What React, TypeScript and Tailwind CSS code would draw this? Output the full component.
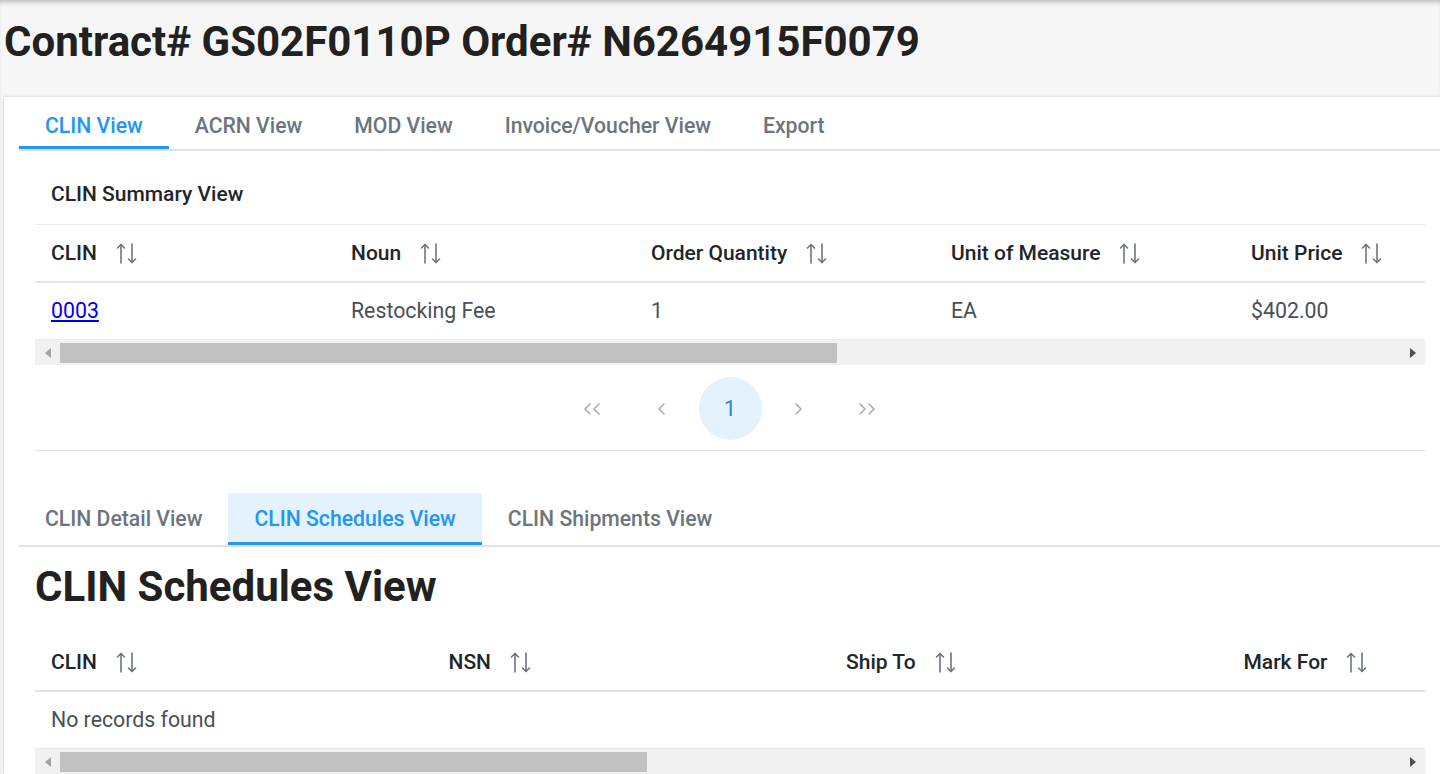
import React from 'react';

const topColumns = ['CLIN', 'Noun', 'Order Quantity', 'Unit of Measure', 'Unit Price'];
const bottomColumns = ['CLIN', 'NSN', 'Ship To', 'Mark For'];

function SortIcon() {
  return (
    <svg width="22" height="21" viewBox="0 0 22 21" fill="none" className="ml-[19px] shrink-0">
      <g stroke="#6c757d" strokeWidth="1.6" strokeLinecap="round" strokeLinejoin="round">
        <path d="M5 20V1.5" />
        <path d="M1.5 5L5 1.5L8.5 5" />
        <path d="M16 1V19.5" />
        <path d="M12.5 16L16 19.5L19.5 16" />
      </g>
    </svg>
  );
}

function Chevron({ dir, double }: { dir: 'left' | 'right'; double?: boolean }) {
  const single = dir === 'left' ? 'M7 1L2 6L7 11' : 'M1 1L6 6L1 11';
  return (
    <svg width={double ? 19 : 9} height="12" viewBox={double ? '0 0 19 12' : '0 0 9 12'} fill="none">
      <g stroke="#a9a9a9" strokeWidth="1.5" strokeLinecap="round" strokeLinejoin="round">
        <path d={single} />
        {double && <path d={single} transform="translate(9 0)" />}
      </g>
    </svg>
  );
}

function ScrollBar({ thumb }: { thumb: string }) {
  return (
    <div className="flex h-[25px] items-center bg-[#f1f1f1]">
      <div className="flex h-[25px] w-[25px] items-center justify-center">
        <svg width="6" height="10" viewBox="0 0 6 10">
          <polygon points="6,0 0,5 6,10" fill="#a3a3a3" />
        </svg>
      </div>
      <div className={`h-[20px] bg-[#c1c1c1] ${thumb}`} />
      <div className="flex-1" />
      <div className="flex h-[25px] w-[25px] items-center justify-center">
        <svg width="6" height="10" viewBox="0 0 6 10">
          <polygon points="0,0 6,5 0,10" fill="#505050" />
        </svg>
      </div>
    </div>
  );
}

function Tabs({ items, active, activeBg, top }: { items: string[]; active: number; activeBg?: boolean; top?: boolean }) {
  return (
    <div className="flex border-b-2 border-[#dee2e6]">
      {items.map((t, i) => (
        <div
          key={t}
          className={`flex h-[52px] items-center border-b-[3px] px-[26px] text-[21.2px] font-medium ${top ? 'pt-[8px]' : 'pt-[3px]'} ${
            i === active
              ? `border-[#2196f3] text-[#2196f3] ${activeBg ? 'bg-[#e3f2fd]' : ''}`
              : 'border-transparent text-[#6c757d]'
          }`}
        >
          {t}
        </div>
      ))}
    </div>
  );
}

export default function App() {
  return (
    <div className="min-h-screen bg-[#f6f6f6] font-['Roboto',sans-serif] shadow-[inset_0_5px_5px_-3px_rgba(0,0,0,0.25)]">
      <h1 className="pl-[4px] pt-[16px] text-[42px] font-bold leading-[51px] text-[#212121]">
        Contract# GS02F0110P Order# N6264915F0079
      </h1>

      <div className="ml-[4px] mt-[30px] bg-white pl-[15px] shadow-[0_0_3px_rgba(0,0,0,0.18)]">
        <Tabs items={['CLIN View', 'ACRN View', 'MOD View', 'Invoice/Voucher View', 'Export']} active={0} top />

        <div className="pl-[16px] pr-[15px]">
          <div className="pl-[16px] pb-[18px] pt-[31px] text-[21px] font-medium leading-[24px] text-[#212529]">
            CLIN Summary View
          </div>

          {/* summary table */}
          <div className="overflow-hidden">
            <div className="flex w-[1500px] border-b-2 border-t border-[#e4e4e4] border-t-[#e9ecef]">
              {topColumns.map((c) => (
                <div key={c} className="flex w-[300px] shrink-0 items-center px-[16px] py-[16px] text-[21px] font-medium leading-[24px] text-[#212529]">
                  {c}
                  <SortIcon />
                </div>
              ))}
            </div>
            <div className="flex w-[1500px] border-b border-[#e9ecef] text-[21.3px] leading-[24px] text-[#495057]">
              <div className="w-[300px] shrink-0 px-[16px] py-[16px]">
                <a href="#" className="text-[#0000ee] underline">0003</a>
              </div>
              <div className="w-[300px] shrink-0 px-[16px] py-[16px]">Restocking Fee</div>
              <div className="w-[300px] shrink-0 px-[16px] py-[16px]">1</div>
              <div className="w-[300px] shrink-0 px-[16px] py-[16px]">EA</div>
              <div className="w-[300px] shrink-0 px-[16px] py-[16px]">$402.00</div>
            </div>
          </div>
          <ScrollBar thumb="w-[777px]" />

          {/* paginator */}
          <div className="flex items-center justify-center border-b border-[#e4e4e4] pb-[10px] pt-[12px]">
            <button className="mx-[3px] flex h-[63px] w-[63px] items-center justify-center">
              <Chevron dir="left" double />
            </button>
            <button className="mx-[3px] flex h-[63px] w-[63px] items-center justify-center">
              <Chevron dir="left" />
            </button>
            <button className="mx-[3px] flex h-[63px] w-[63px] items-center justify-center rounded-full bg-[#e3f2fd] text-[21.3px] text-[#2b87d8]">
              1
            </button>
            <button className="mx-[3px] flex h-[63px] w-[63px] items-center justify-center">
              <Chevron dir="right" />
            </button>
            <button className="mx-[3px] flex h-[63px] w-[63px] items-center justify-center">
              <Chevron dir="right" double />
            </button>
          </div>
        </div>

        <div className="mt-[42px]">
          <Tabs items={['CLIN Detail View', 'CLIN Schedules View', 'CLIN Shipments View']} active={1} activeBg />
        </div>

        <div className="pl-[16px] pr-[15px]">
          <h2 className="mt-[14px] text-[42px] font-bold leading-[51px] text-[#212121]">CLIN Schedules View</h2>

          <div className="mt-[22px] overflow-hidden">
            <div className="flex w-[1600px] border-b-2 border-[#e4e4e4]">
              {bottomColumns.map((c) => (
                <div key={c} className="flex w-[397.5px] shrink-0 items-center px-[16px] py-[16px] text-[21px] font-medium leading-[24px] text-[#212529]">
                  {c}
                  <SortIcon />
                </div>
              ))}
            </div>
            <div className="border-b border-[#e9ecef] px-[16px] py-[16px] text-[21.3px] leading-[24px] text-[#495057]">
              No records found
            </div>
          </div>
          <ScrollBar thumb="w-[587px]" />
        </div>
      </div>
    </div>
  );
}
